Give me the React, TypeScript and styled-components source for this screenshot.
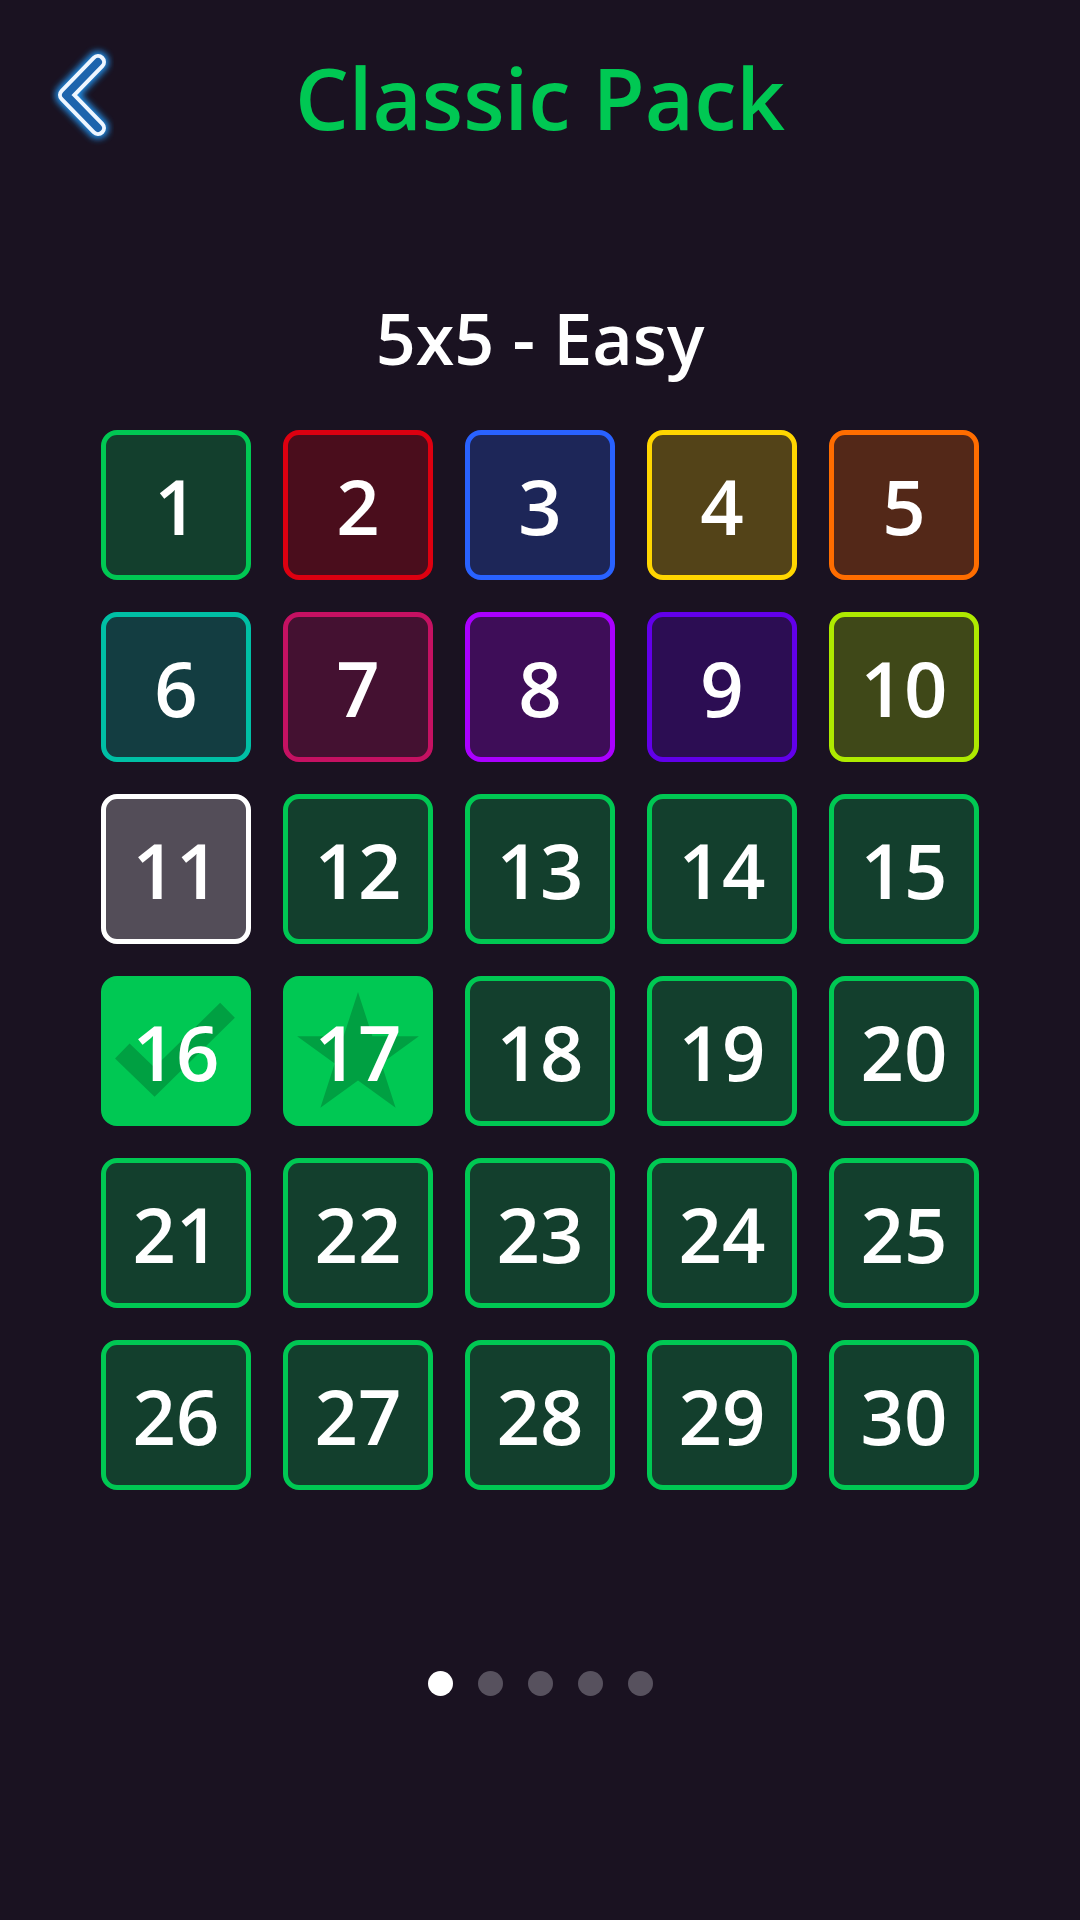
import React from "react";
import styled, { createGlobalStyle } from "styled-components";

const GlobalStyle = createGlobalStyle`
  html, body {
    margin: 0;
    padding: 0;
    background: #1a1221;
  }
  body {
    font-family: "Open Sans", "Noto Sans", sans-serif;
  }
`;

const Page = styled.div`
  width: 1080px;
  min-height: 1920px;
  display: flex;
  flex-direction: column;
  align-items: center;
  background: #1a1221;
`;

const Header = styled.header`
  width: 100%;
  box-sizing: border-box;
  margin-top: 47px;
  height: 100px;
  padding: 0 40px;
  display: grid;
  grid-template-columns: 1fr auto 1fr;
  align-items: center;
`;

const BackButton = styled.button`
  justify-self: start;
  margin-top: -2px;
  width: 80px;
  height: 100px;
  padding: 0;
  border: none;
  background: transparent;
  cursor: pointer;
  display: block;
  svg {
    display: block;
    overflow: visible;
  }
`;

const Title = styled.h1`
  margin: 0;
  font-size: 85px;
  line-height: 100px;
  font-weight: 600;
  color: #00c853;
  white-space: nowrap;
`;

const Subtitle = styled.h2`
  margin: 155px 0 0;
  font-size: 70px;
  line-height: 72px;
  font-weight: 600;
  color: #ffffff;
`;

const Grid = styled.div`
  margin-top: 56px;
  display: grid;
  grid-template-columns: repeat(5, 150px);
  grid-auto-rows: 150px;
  column-gap: 32px;
  row-gap: 32px;
`;

const Tile = styled.button<{ $color: string; $filled: boolean }>`
  position: relative;
  box-sizing: border-box;
  width: 150px;
  height: 150px;
  padding: 0;
  border: 5px solid ${(p) => p.$color};
  border-radius: 16px;
  background: ${(p) => (p.$filled ? p.$color : `color-mix(in srgb, ${p.$color} 25%, transparent)`)};
  display: flex;
  align-items: center;
  justify-content: center;
  cursor: pointer;
  font-family: "Open Sans", "Noto Sans", sans-serif;
`;

const TileNumber = styled.span`
  position: relative;
  z-index: 1;
  margin-top: 2px;
  font-size: 76px;
  line-height: 76px;
  font-weight: 600;
  color: #ffffff;
`;

const Mark = styled.svg`
  position: absolute;
  top: -5px;
  left: -5px;
  width: 150px;
  height: 150px;
  z-index: 0;
`;

const Dots = styled.div`
  margin-top: 181px;
  display: flex;
  gap: 25px;
`;

const Dot = styled.span<{ $active: boolean }>`
  width: 25px;
  height: 25px;
  border-radius: 50%;
  background: ${(p) => (p.$active ? "#ffffff" : "#57515e")};
`;

const GREEN = "#00c853";
const colors: Record<number, string> = {
  1: GREEN,
  2: "#dd0010",
  3: "#2962ff",
  4: "#ffd600",
  5: "#ff6d00",
  6: "#00bfa5",
  7: "#c51162",
  8: "#aa00ff",
  9: "#6200ea",
  10: "#aeea00",
  11: "#ffffff",
};

const starPoints = (() => {
  const cx = 75;
  const cy = 80;
  const R = 64;
  const r = 24.5;
  const pts: string[] = [];
  for (let k = 0; k < 10; k++) {
    const a = ((-90 + k * 36) * Math.PI) / 180;
    const rad = k % 2 === 0 ? R : r;
    pts.push(`${(cx + rad * Math.cos(a)).toFixed(1)},${(cy + rad * Math.sin(a)).toFixed(1)}`);
  }
  return pts.join(" ");
})();

const Chevron = () => (
  <svg width="80" height="100" viewBox="0 0 80 100">
    <defs>
      <filter id="glow" x="-50%" y="-50%" width="200%" height="200%">
        <feGaussianBlur stdDeviation="3" />
      </filter>
    </defs>
    <polyline
      points="58,16 26,49 58,82"
      fill="none"
      stroke="#2196f3"
      strokeWidth="22"
      strokeLinecap="round"
      strokeLinejoin="round"
      filter="url(#glow)"
      opacity="0.9"
    />
    <polyline
      points="58,16 26,49 58,82"
      fill="none"
      stroke="#eef6ff"
      strokeWidth="16"
      strokeLinecap="round"
      strokeLinejoin="round"
    />
    <polyline
      points="58,16 26,49 58,82"
      fill="none"
      stroke="#1c64ad"
      strokeWidth="8"
      strokeLinecap="round"
      strokeLinejoin="round"
    />
  </svg>
);

const levels = Array.from({ length: 30 }, (_, i) => i + 1);

export default function App() {
  return (
    <>
      <GlobalStyle />
      <Page>
        <Header>
          <BackButton aria-label="Back">
            <Chevron />
          </BackButton>
          <Title>Classic Pack</Title>
          <span />
        </Header>
        <Subtitle>5x5 - Easy</Subtitle>
        <Grid>
          {levels.map((n) => {
            const filled = n === 16 || n === 17;
            const color = colors[n] ?? GREEN;
            return (
              <Tile key={n} $color={color} $filled={filled}>
                {n === 16 && (
                  <Mark viewBox="0 0 150 150">
                    <polyline
                      points="21.3,75 53.5,106 126.5,34.3"
                      fill="none"
                      stroke="rgba(0,0,0,0.2)"
                      strokeWidth="21"
                      strokeLinejoin="miter"
                      strokeLinecap="butt"
                    />
                  </Mark>
                )}
                {n === 17 && (
                  <Mark viewBox="0 0 150 150">
                    <polygon points={starPoints} fill="rgba(0,0,0,0.2)" />
                  </Mark>
                )}
                <TileNumber>{n}</TileNumber>
              </Tile>
            );
          })}
        </Grid>
        <Dots>
          {[0, 1, 2, 3, 4].map((i) => (
            <Dot key={i} $active={i === 0} />
          ))}
        </Dots>
      </Page>
    </>
  );
}
